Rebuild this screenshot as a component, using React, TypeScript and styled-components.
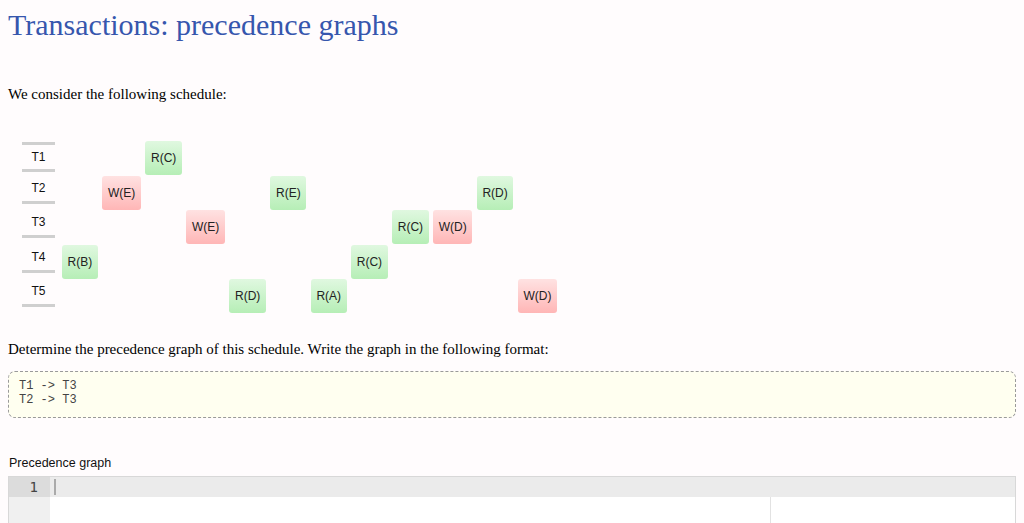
import styled, { createGlobalStyle } from 'styled-components';

type Op = { tx: number; label: string; kind: 'r' | 'w' };

const transactions = [
  { name: 'T1', height: 24, shift: 0 },
  { name: 'T2', height: 29, shift: 3 },
  { name: 'T3', height: 31, shift: 4 },
  { name: 'T4', height: 32, shift: 5 },
  { name: 'T5', height: 31, shift: 4 },
];

const schedule: Op[] = [
  { tx: 4, label: 'R(B)', kind: 'r' },
  { tx: 2, label: 'W(E)', kind: 'w' },
  { tx: 1, label: 'R(C)', kind: 'r' },
  { tx: 3, label: 'W(E)', kind: 'w' },
  { tx: 5, label: 'R(D)', kind: 'r' },
  { tx: 2, label: 'R(E)', kind: 'r' },
  { tx: 5, label: 'R(A)', kind: 'r' },
  { tx: 4, label: 'R(C)', kind: 'r' },
  { tx: 3, label: 'R(C)', kind: 'r' },
  { tx: 3, label: 'W(D)', kind: 'w' },
  { tx: 2, label: 'R(D)', kind: 'r' },
  { tx: 5, label: 'W(D)', kind: 'w' },
];

const GlobalStyle = createGlobalStyle`
  html, body {
    margin: 0;
    padding: 0;
    background: #fffcfd;
  }
  body {
    font-family: "Liberation Serif", "Times New Roman", serif;
    color: #000;
  }
`;

const Page = styled.div`
  padding: 0 8px;
`;

const Title = styled.h1`
  margin: 0;
  padding-top: 7px;
  font-size: 30px;
  font-weight: normal;
  line-height: 36px;
  color: #3656ad;
`;

const Paragraph = styled.p<{ $top: number }>`
  margin: ${(p) => p.$top}px 0 0;
  font-size: 15px;
  line-height: 18px;
`;

const Schedule = styled.div`
  display: flex;
  gap: 7px;
  margin: 38px 0 0 14px;
`;

const Labels = styled.div`
  width: 33px;
  border-top: 3px solid #cfcfcf;
  margin-top: 1px;
  align-self: flex-start;
`;

const Label = styled.div<{ $h: number; $shift: number }>`
  box-sizing: border-box;
  height: ${(p) => p.$h + 3}px;
  padding-top: ${(p) => p.$shift}px;
  border-bottom: 3px solid #cfcfcf;
  display: flex;
  align-items: center;
  justify-content: center;
  font-family: "Liberation Sans", Arial, sans-serif;
  font-size: 12px;
  color: #111;
`;

const Ops = styled.div`
  display: grid;
  grid-template-rows: repeat(5, 34.6px);
  grid-auto-columns: max-content;
  column-gap: 4.5px;
`;

const OpBox = styled.div<{ $row: number; $col: number; $kind: 'r' | 'w' }>`
  grid-row: ${(p) => p.$row};
  grid-column: ${(p) => p.$col};
  height: 34px;
  padding: 0 5.6px;
  border-radius: 3px;
  display: flex;
  align-items: center;
  justify-content: center;
  font-family: "Liberation Sans", Arial, sans-serif;
  font-size: 12px;
  color: #222;
  background: ${(p) =>
    p.$kind === 'r'
      ? 'linear-gradient(#e0f8e0, #b6eeb6)'
      : 'linear-gradient(#ffe2e2, #ffb6b6)'};
`;

const CodeBox = styled.pre`
  margin: 13px 0 0;
  height: 47px;
  box-sizing: border-box;
  padding: 7px 10px;
  border: 1px dashed #9a9a9a;
  border-radius: 7px;
  background: #fffff0;
  font-family: "Liberation Mono", "Courier New", monospace;
  font-size: 12px;
  line-height: 14px;
  color: #444;
`;

const FieldLabel = styled.div`
  margin-top: 37px;
  padding-left: 1px;
  font-family: "Liberation Sans", Arial, sans-serif;
  font-size: 12.5px;
  line-height: 16px;
  color: #111;
`;

const Editor = styled.div`
  margin-top: 5px;
  height: 80px;
  border: 1px solid #d8d8d8;
  display: flex;
  background: #fff;
`;

const Gutter = styled.div`
  width: 41px;
  background: #f0f0f0;
`;

const GutterLine = styled.div`
  height: 20px;
  background: #dcdcdc;
  padding-right: 12px;
  text-align: right;
  font-family: "DejaVu Sans Mono", monospace;
  font-size: 14px;
  line-height: 20px;
  color: #444;
`;

const Content = styled.div`
  flex: 1;
  display: flex;
  flex-direction: column;
`;

const ActiveLine = styled.div`
  height: 20px;
  background: #ebebeb;
  display: flex;
  align-items: center;
  padding-left: 4px;
`;

const Cursor = styled.div`
  width: 2px;
  height: 16px;
  background: #aaa;
`;

const Body = styled.div`
  flex: 1;
  display: flex;
`;

const PrintMargin = styled.div`
  width: 720px;
  border-right: 1px solid #e2e2e2;
`;

export default function App() {
  return (
    <Page>
      <GlobalStyle />
      <Title>Transactions: precedence graphs</Title>
      <Paragraph $top={42}>We consider the following schedule:</Paragraph>
      <Schedule>
        <Labels>
          {transactions.map((t) => (
            <Label key={t.name} $h={t.height} $shift={t.shift}>
              {t.name}
            </Label>
          ))}
        </Labels>
        <Ops>
          {schedule.map((op, i) => (
            <OpBox key={i} $row={op.tx} $col={i + 1} $kind={op.kind}>
              {op.label}
            </OpBox>
          ))}
        </Ops>
      </Schedule>
      <Paragraph $top={26}>
        Determine the precedence graph of this schedule. Write the graph in the following format:
      </Paragraph>
      <CodeBox>{'T1 -> T3\nT2 -> T3'}</CodeBox>
      <FieldLabel>Precedence graph</FieldLabel>
      <Editor>
        <Gutter>
          <GutterLine>1</GutterLine>
        </Gutter>
        <Content>
          <ActiveLine>
            <Cursor />
          </ActiveLine>
          <Body>
            <PrintMargin />
          </Body>
        </Content>
      </Editor>
    </Page>
  );
}
